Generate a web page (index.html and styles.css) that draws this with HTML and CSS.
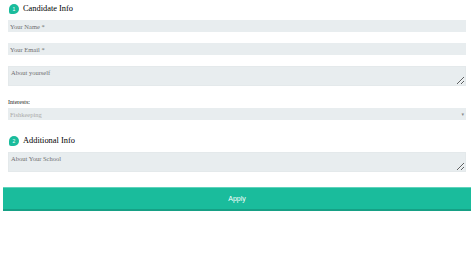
FILE: index.html
```html
<!DOCTYPE html>
<html>
<head>
<meta charset="utf-8">
<link rel="stylesheet" href="styles.css">
</head>
<body>
<form class="form">
  <h2 class="section-title"><span class="badge">1</span>Candidate Info</h2>
  <input class="field" type="text" placeholder="Your Name *">
  <input class="field" type="email" placeholder="Your Email *">
  <textarea class="field area" placeholder="About yourself"></textarea>
  <label class="label">Interests:</label>
  <div class="select-wrap">
    <select class="field select">
      <option>Fishkeeping</option>
    </select>
    <span class="arrow">&#9662;</span>
  </div>
  <h2 class="section-title second"><span class="badge">2</span>Additional Info</h2>
  <textarea class="field area" placeholder="About Your School"></textarea>
  <button class="apply" type="button">Apply</button>
</form>
</body>
</html>
```
FILE: styles.css
```css
html, body {
  margin: 0;
  padding: 0;
  background: #fff;
}
body {
  font-family: "Liberation Serif", "Times New Roman", serif;
  color: #222;
}
.form {
  display: flex;
  flex-direction: column;
  padding: 3px 8px 0 8px;
}
.section-title {
  display: flex;
  align-items: center;
  gap: 4px;
  margin: 0 0 6px 1px;
  font-size: 8.4px;
  font-weight: normal;
  height: 11px;
  color: #000;
}
.section-title.second {
  margin-top: 4px;
  margin-bottom: 6px;
}
.badge {
  width: 10px;
  height: 10px;
  border-radius: 5px 5px 5px 2px;
  background: #1abc9c;
  color: #fff;
  font-family: "Liberation Sans", Arial, sans-serif;
  font-size: 5px;
  display: flex;
  align-items: center;
  justify-content: center;
}
.field {
  box-sizing: border-box;
  width: 100%;
  margin: 0 0 11px 0;
  border: none;
  background: #e8edef;
  height: 12px;
  padding: 0 2px;
  font-family: "Liberation Serif", serif;
  font-size: 6.5px;
  color: #888;
  outline: none;
}
.field::placeholder {
  color: #6f6f6f;
}
.area {
  height: 20px;
  padding: 2px 2px;
  margin-bottom: 13px;
  resize: vertical;
  border: 1px solid #e4e9eb;
}
.label {
  font-size: 6px;
  color: #222;
  margin: 0 0 3px 0;
  line-height: 6px;
}
.select-wrap {
  position: relative;
  margin-bottom: 11px;
}
.select {
  color: #aaa;
  -webkit-appearance: none;
  appearance: none;
  margin: 0;
  display: block;
}
.arrow {
  position: absolute;
  right: 2px;
  top: 3px;
  font-size: 5px;
  line-height: 6px;
  color: #888;
  font-family: "DejaVu Sans", sans-serif;
}
.apply {
  margin: 2px -5px 0 -5px;
  height: 24px;
  border: none;
  border-top: 1px solid #5fd3bb;
  border-bottom: 2px solid #16a085;
  background: #1abc9c;
  color: #fff;
  font-family: "Liberation Sans", Arial, sans-serif;
  font-size: 7px;
}
```
